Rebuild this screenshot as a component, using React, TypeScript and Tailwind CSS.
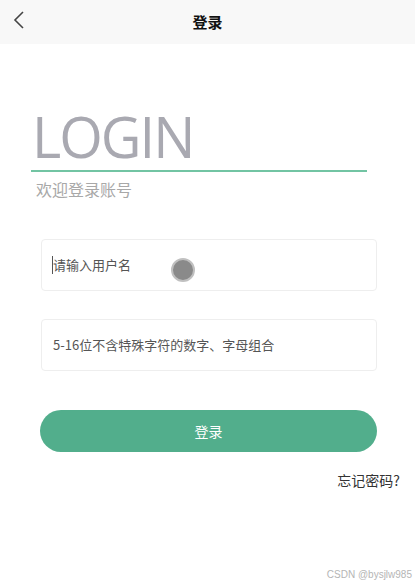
import React from 'react';

export default function App() {
  return (
    <div className="relative w-[415px] h-[587px] bg-white overflow-hidden font-['Noto_Sans_CJK_SC',sans-serif]">
      {/* Header */}
      <div className="relative h-[44px] bg-[#f8f8f8] flex items-center justify-center">
        <svg className="absolute left-[12px] top-[10px]" width="14" height="20" viewBox="0 0 14 20" fill="none">
          <path d="M11 2 L3 10 L11 18" stroke="#444" strokeWidth="1.6" />
        </svg>
        <span className="text-[15px] font-bold text-[#111]">登录</span>
      </div>

      {/* Title */}
      <div className="mt-[62px] ml-[31px] w-[336px]">
        <div className="pl-[1px] text-[56px] leading-[60px] text-[#a9a9b1] font-['Open_Sans',sans-serif] tracking-[-2px]">
          LOGIN
        </div>
        <div className="mt-[4px] h-[2px] bg-[#72c4a3]" />
        <div className="mt-[7px] ml-[5px] text-[16px] leading-[20px] text-[#a8a8a8]">欢迎登录账号</div>
      </div>

      {/* Inputs */}
      <div className="mt-[40px] ml-[41px] w-[336px] flex flex-col gap-[28px]">
        <div className="relative h-[52px] border border-[#eeeeee] rounded-[4px] flex items-center pl-[10px]">
          <span className="w-[1px] h-[18px] bg-[#555]" />
          <span className="text-[13px] text-[#555]">请输入用户名</span>
          <span className="absolute left-[129px] top-[18px] w-[24px] h-[24px] rounded-full bg-[#8a8a8a] border-[2px] border-[#c0c0c0]" />
        </div>
        <div className="h-[52px] border border-[#eeeeee] rounded-[4px] flex items-center pl-[11px]">
          <span className="text-[13px] text-[#555]">5-16位不含特殊字符的数字、字母组合</span>
        </div>
      </div>

      {/* Button */}
      <div className="mt-[39px] ml-[40px] w-[337px] h-[42px] rounded-full bg-[#52ae8c] flex items-center justify-center">
        <span className="text-[14px] text-white">登录</span>
      </div>

      <div className="mt-[18px] pr-[15px] flex justify-end">
        <span className="text-[14px] text-[#333]">忘记密码?</span>
      </div>

      <div className="absolute right-[3px] bottom-[5px] text-[10px] text-[#b5b5b5] font-['Liberation_Sans',sans-serif]">
        CSDN @bysjlw985
      </div>
    </div>
  );
}
